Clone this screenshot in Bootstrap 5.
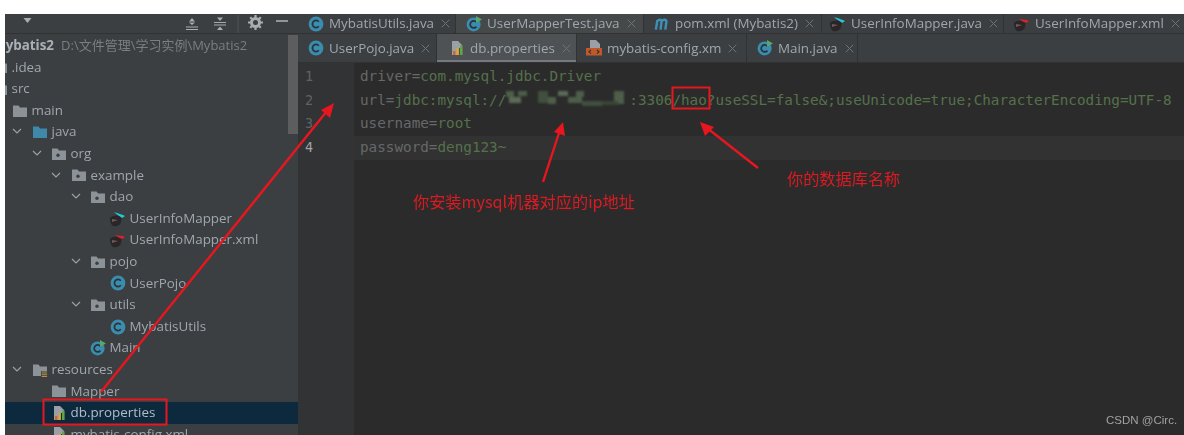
<!DOCTYPE html>
<html lang="zh">
<head>
<meta charset="utf-8">
<title>db.properties</title>
<link href="https://cdn.jsdelivr.net/npm/bootstrap@5.3.0/dist/css/bootstrap.min.css" rel="stylesheet">
<style>
html,body{height:435px;overflow:hidden;background:#fff}
.shot{width:1184px;height:435px;padding:14px 0 0 5px;filter:blur(.35px);font-family:"Open Sans","Noto Sans CJK SC",sans-serif;font-size:13.4px;color:#a9b7c6}
.side{width:293px;height:421px;background:#3c3f41;overflow:hidden;flex:none}
.side-head{height:20px;flex:none;border-bottom:1px solid #323232;color:#afb1b3}
.side-head svg{display:block;position:absolute;top:1px}
.ic-caret{left:17px}.ic-exp{left:179px}.ic-col{left:207px}.ic-sep{left:232px}.ic-gear{left:243px}.ic-min{left:270px}
.tree{position:relative;flex:1 1 auto;padding-top:1px}
.tree-bar{position:absolute;left:283px;top:1px;width:10px;height:99px;background:#5b5d5f}
.trow{height:21.6px;line-height:21.6px;white-space:nowrap;color:#9fa7ae;position:relative}
.trow svg{flex:none}
.chev{width:10px;height:7px;position:absolute;top:7px}
.ico{width:16px;height:16px;margin-right:3.5px}
.d0{padding-left:7px}.d1{padding-left:27px}.d2{padding-left:46px}.d3{padding-left:66px}.d4{padding-left:85px}.d5{padding-left:105px}
.dm1{margin-left:-13px}.droot{margin-left:-12px}
.d1 .chev{left:7px}.d2 .chev{left:27px}.d3 .chev{left:46px}.d4 .chev{left:66px}
.root-name{font-weight:700;color:#a9b0b6}
.root-path{color:#7b7e80;margin-left:7px;font-size:13px}
.selrow{background:#0d293e;color:#b4bcc4}
.main-col{min-width:0;flex:1 1 auto}
.tabrow{background:#3c3f41;white-space:nowrap;color:#9fa7ae;border-bottom:1px solid #323232;overflow:hidden;flex:none}
.tabrow-a{height:20px}
.tabrow-b{height:29px}
.tabx{display:flex;align-items:center;position:relative;border-right:1px solid #323232;height:100%;flex:none}
.tab-on{background:#4e5254}
.tab-on::after{content:"";position:absolute;left:0;right:0;bottom:-1px;height:3px;background:#747a80}
.tab-soft{background:#45494a}
.tabx .ico{margin-right:5px}
.xmark{width:9px;height:9px;margin-left:7px}
.w1{width:158px;padding-left:10px}.w2{width:188px;padding-left:10px}.w3{width:178px;padding-left:10px}.w4{width:182px;padding-left:8px}.w5{width:180px;padding-left:10px;border-right:0}
.v1{width:139px;padding-left:10px}.v2{width:140px;padding-left:12px}.v3{width:170px;padding-left:9px}.v4{width:111px;padding-left:10px}
.edit{flex:1 1 auto;background:#2b2b2b;min-height:0}
.gutter{width:56px;background:#313335;color:#606366;padding-top:2px;flex:none}
.gutter>div{padding-left:7px}
.lnum,.cline{height:23.7px;line-height:23.7px;font-family:"DejaVu Sans Mono","Liberation Mono",monospace;font-size:14.3px}
.lnum{font-size:13.4px}
.lnum-on{color:#a4a3a3}
.code{flex:1 1 auto;padding-top:2px;color:#55714c;white-space:nowrap;overflow:hidden}
.cline{padding-left:6px}
.cline-on{background:#323232}
.pkey{color:#66686a}
.mosaic{display:inline-block;width:123px;height:18px;vertical-align:-4px;filter:blur(1.2px)}
.paint{position:absolute;left:0;top:0;pointer-events:none}
.note{position:absolute;color:#dd1a22;font-size:16.2px;line-height:22px;white-space:nowrap;font-family:"Noto Sans CJK SC",sans-serif}
.note-a{left:413px;top:190px}
.note-b{left:787px;top:167px}
.mark-csdn{position:absolute;left:1106px;top:413px;font-size:11.5px;line-height:14px;color:#a2a2a2;font-family:"Liberation Sans",sans-serif}
</style>
</head>
<body class="m-0">
<svg width="0" height="0" class="position-absolute">
  <defs>
    <symbol id="i-class" viewBox="0 0 16 16"><circle cx="8" cy="8" r="7.4" fill="#3b8db0"/><path d="M10.8 5.7A3.6 3.6 0 1 0 10.8 10.3" fill="none" stroke="#2b3338" stroke-width="1.7"/></symbol>
    <symbol id="i-main" viewBox="0 0 16 16"><circle cx="7.6" cy="8.4" r="7" fill="#3b8db0"/><path d="M10.4 6.2A3.5 3.5 0 1 0 10.4 10.6" fill="none" stroke="#2b3338" stroke-width="1.7"/><path d="M10 0l6 3.4-6 3.4z" fill="#59a869"/></symbol>
    <symbol id="i-folder" viewBox="0 0 16 16"><path d="M1 2.5h5.5l1.5 2h7v9.5H1z" fill="#8b9298"/></symbol>
    <symbol id="i-blue" viewBox="0 0 16 16"><path d="M1 2.5h5.5l1.5 2h7v9.5H1z" fill="#3f88aa"/></symbol>
    <symbol id="i-pkg" viewBox="0 0 16 16"><path d="M1 2.5h5.5l1.5 2h7v9.5H1z" fill="#8b9298"/><circle cx="7" cy="9.3" r="1.7" fill="#3c3f41"/></symbol>
    <symbol id="i-res" viewBox="0 0 16 16"><path d="M1 2.5h5.5l1.5 2h7v9.5H1z" fill="#8b9298"/><rect x="9" y="9" width="6.5" height="6.5" fill="#3c3f41"/><path d="M9.7 10h5.4M9.7 12.2h5.4M9.7 14.4h5.4" stroke="#b89146" stroke-width="1.2"/></symbol>
    <symbol id="i-bird" viewBox="0 0 16 16"><path d="M0 7c3-3 9-3 12-1l-1 5c-1 4-6 5-8 4-2-1-3-5-3-8z" fill="#2a2526"/><path d="M2 8l6 1-6 2z" fill="#6d5a58"/><path d="M4 1l9 3 2 1-3 2C10 5 7 4 4 1z" fill="#22c8d8"/></symbol>
    <symbol id="i-birdx" viewBox="0 0 16 16"><path d="M0 7c3-3 9-3 12-1l-1 5c-1 4-6 5-8 4-2-1-3-5-3-8z" fill="#2a2526"/><path d="M2 8l6 1-6 2z" fill="#6d5a58"/><path d="M5 3l8 1 2 1-3 2C10 6 7 5 5 3z" fill="#d3232b"/></symbol>
    <symbol id="i-prop" viewBox="0 0 16 16"><path d="M3 1h6l4 4v3H9v7H3z" fill="#9aa0a6"/><rect x="4" y="11" width="2.4" height="4" fill="#d0682b"/><rect x="7.5" y="8" width="2.4" height="7" fill="#e0a82e"/><rect x="11" y="5.5" width="2.6" height="9.5" fill="#5fa54a"/></symbol>
    <symbol id="i-xml" viewBox="0 0 16 16"><path d="M4 0h6l4 4v4H4z" fill="#9aa0a6"/><rect x="0" y="8" width="16" height="7.5" fill="#c0582a"/><path d="M5 10l-2 1.8 2 1.8M11 10l2 1.8-2 1.8" fill="none" stroke="#2f2f2f" stroke-width="1.1"/></symbol>
    <symbol id="i-m" viewBox="0 0 17 14"><path d="M2 13l1.6-10M3.4 4c2-2 4.5-2 4.6 0L7 13M8.2 4c2-2 5-2 5 .6L12 13" fill="none" stroke="#3d8fb4" stroke-width="2.6"/></symbol>
    <symbol id="i-chev" viewBox="0 0 10 7"><path d="M1 1l4 4 4-4" fill="none" stroke="#9da0a2" stroke-width="1.2"/></symbol>
    <symbol id="i-x" viewBox="0 0 9 9"><path d="M.7.7l7.6 7.6M8.3.7L.7 8.3" stroke="#6f7375" stroke-width="1"/></symbol>
  </defs>
</svg>

<div class="shot position-relative">
  <div class="d-flex h-100">
    <aside class="side d-flex flex-column">
      <div class="side-head position-relative">
        <svg class="ic-caret" width="12" height="10" viewBox="0 0 12 10"><path d="M1.500 3h8l-4 5z" fill="#a9adb0"/></svg>
        <svg class="ic-exp" width="16" height="16" viewBox="0 0 16 16"><path d="M2 12h12M2 14.500h12" stroke="#a9adb0" stroke-width="1.200"/><path d="M8 3l3 3.500H5z" fill="#a9adb0"/><path d="M8 10l3-2.500H5z" fill="#a9adb0"/></svg>
        <svg class="ic-col" width="16" height="16" viewBox="0 0 16 16"><path d="M2 7.500h12M2 10h12" stroke="#a9adb0" stroke-width="1.200"/><path d="M8 6L5 2.500h6zM8 11.500l3 3.500H5z" fill="#a9adb0"/></svg>
        <svg class="ic-sep" width="2" height="18" viewBox="0 0 2 18"><path d="M1 0v18" stroke="#505356"/></svg>
        <svg class="ic-gear" width="15" height="15" viewBox="0 0 15 15"><circle cx="7.500" cy="7.500" r="4" fill="none" stroke="#a9adb0" stroke-width="3"/><path d="M7.500 0v15M0 7.500h15M2.200 2.200l10.600 10.600M12.800 2.200L2.200 12.800" stroke="#a9adb0" stroke-width="2.200" stroke-dasharray="3 9 3"/></svg>
        <svg class="ic-min" width="14" height="14" viewBox="0 0 14 14"><path d="M1 6h12" stroke="#a9adb0" stroke-width="1.600"/></svg>
      </div>
      <div class="tree">
        <div class="trow droot"><span class="root-name">Mybatis2</span><span class="root-path">D:\文件管理\学习实例\Mybatis2</span></div>
        <div class="trow dm1 d-flex align-items-center"><svg class="ico"><use href="#i-folder"/></svg>.idea</div>
        <div class="trow dm1 d-flex align-items-center"><svg class="ico"><use href="#i-folder"/></svg>src</div>
        <div class="trow d0 d-flex align-items-center"><svg class="ico"><use href="#i-folder"/></svg>main</div>
        <div class="trow d1 d-flex align-items-center"><svg class="chev"><use href="#i-chev"/></svg><svg class="ico"><use href="#i-blue"/></svg>java</div>
        <div class="trow d2 d-flex align-items-center"><svg class="chev"><use href="#i-chev"/></svg><svg class="ico"><use href="#i-pkg"/></svg>org</div>
        <div class="trow d3 d-flex align-items-center"><svg class="chev"><use href="#i-chev"/></svg><svg class="ico"><use href="#i-pkg"/></svg>example</div>
        <div class="trow d4 d-flex align-items-center"><svg class="chev"><use href="#i-chev"/></svg><svg class="ico"><use href="#i-pkg"/></svg>dao</div>
        <div class="trow d5 d-flex align-items-center"><svg class="ico"><use href="#i-bird"/></svg>UserInfoMapper</div>
        <div class="trow d5 d-flex align-items-center"><svg class="ico"><use href="#i-birdx"/></svg>UserInfoMapper.xml</div>
        <div class="trow d4 d-flex align-items-center"><svg class="chev"><use href="#i-chev"/></svg><svg class="ico"><use href="#i-pkg"/></svg>pojo</div>
        <div class="trow d5 d-flex align-items-center"><svg class="ico"><use href="#i-class"/></svg>UserPojo</div>
        <div class="trow d4 d-flex align-items-center"><svg class="chev"><use href="#i-chev"/></svg><svg class="ico"><use href="#i-pkg"/></svg>utils</div>
        <div class="trow d5 d-flex align-items-center"><svg class="ico"><use href="#i-class"/></svg>MybatisUtils</div>
        <div class="trow d4 d-flex align-items-center"><svg class="ico"><use href="#i-main"/></svg>Main</div>
        <div class="trow d1 d-flex align-items-center"><svg class="chev"><use href="#i-chev"/></svg><svg class="ico"><use href="#i-res"/></svg>resources</div>
        <div class="trow d2 d-flex align-items-center"><svg class="ico"><use href="#i-folder"/></svg>Mapper</div>
        <div class="trow d2 selrow d-flex align-items-center"><svg class="ico"><use href="#i-prop"/></svg>db.properties</div>
        <div class="trow d2 d-flex align-items-center"><svg class="ico"><use href="#i-prop"/></svg>mybatis-config.xml</div>
        <div class="tree-bar"></div>
      </div>
    </aside>
    <main class="main-col d-flex flex-column">
      <div class="tabrow tabrow-a d-flex">
        <div class="tabx w1"><svg class="ico"><use href="#i-class"/></svg>MybatisUtils.java<svg class="xmark"><use href="#i-x"/></svg></div>
        <div class="tabx w2 tab-soft"><svg class="ico"><use href="#i-main"/></svg>UserMapperTest.java<svg class="xmark"><use href="#i-x"/></svg></div>
        <div class="tabx w3"><svg class="ico"><use href="#i-m"/></svg>pom.xml (Mybatis2)<svg class="xmark"><use href="#i-x"/></svg></div>
        <div class="tabx w4"><svg class="ico"><use href="#i-bird"/></svg>UserInfoMapper.java<svg class="xmark"><use href="#i-x"/></svg></div>
        <div class="tabx w5"><svg class="ico"><use href="#i-birdx"/></svg>UserInfoMapper.xml<svg class="xmark"><use href="#i-x"/></svg></div>
      </div>
      <div class="tabrow tabrow-b d-flex">
        <div class="tabx v1"><svg class="ico"><use href="#i-class"/></svg>UserPojo.java<svg class="xmark"><use href="#i-x"/></svg></div>
        <div class="tabx v2 tab-on"><svg class="ico"><use href="#i-prop"/></svg>db.properties<svg class="xmark"><use href="#i-x"/></svg></div>
        <div class="tabx v3"><svg class="ico"><use href="#i-xml"/></svg>mybatis-config.xm<svg class="xmark"><use href="#i-x"/></svg></div>
        <div class="tabx v4"><svg class="ico"><use href="#i-main"/></svg>Main.java<svg class="xmark"><use href="#i-x"/></svg></div>
      </div>
      <div class="edit d-flex">
        <div class="gutter">
          <div class="lnum">1</div><div class="lnum">2</div><div class="lnum">3</div><div class="lnum lnum-on">4</div>
        </div>
        <div class="code">
          <div class="cline"><span class="pkey">driver</span><span class="pkey">=</span>com.mysql.jdbc.Driver</div>
          <div class="cline"><span class="pkey">url=</span>jdbc:mysql://<svg class="mosaic" viewBox="0 0 123 18"><g fill="#4d5f49"><rect x="0" y="0" width="8" height="6"/><rect x="3" y="6" width="12" height="6" fill="#5c6b58"/><rect x="12" y="0" width="9" height="5"/><rect x="32" y="0" width="10" height="12" fill="#414f3e"/><rect x="42" y="6" width="8" height="7"/><rect x="52" y="0" width="10" height="5" fill="#5c6b58"/><rect x="62" y="6" width="14" height="6"/><rect x="70" y="0" width="8" height="6"/><rect x="76" y="10" width="20" height="5" fill="#414f3e"/><rect x="108" y="0" width="10" height="13"/><rect x="96" y="10" width="16" height="4" fill="#3a4638"/></g></svg>:3306/hao?useSSL=false&amp;;useUnicode=true;CharacterEncoding=UTF-8</div>
          <div class="cline"><span class="pkey">username=</span>root</div>
          <div class="cline cline-on"><span class="pkey">password=</span>deng123~</div>
        </div>
      </div>
    </main>
  </div>

  <svg class="paint" width="1184" height="435" viewBox="0 0 1184 435">
    <g fill="none" stroke="#e8161e" stroke-width="2">
      <rect x="672.500" y="87.500" width="37" height="21"/>
      <rect x="43.500" y="399.500" width="123" height="25"/>
    </g>
    <g stroke="#e8161e" stroke-width="2.400" fill="#e8161e">
      <path d="M101 392L327 111"/>
      <path d="M543 182L560 130"/>
      <path d="M758 168L707 128"/>
    </g>
    <g fill="#e8161e">
      <path d="M334 103L330 118 321 110z"/>
      <path d="M563 122L565 136 554 132z"/>
      <path d="M700 122L714 127 705 136z"/>
    </g>
  </svg>
  <div class="note note-a">你安装mysql机器对应的ip地址</div>
  <div class="note note-b">你的数据库名称</div>
  <div class="mark-csdn">CSDN @Circ.</div>
</div>
<script src="https://cdn.jsdelivr.net/npm/bootstrap@5.3.0/dist/js/bootstrap.bundle.min.js"></script>
</body>
</html>
